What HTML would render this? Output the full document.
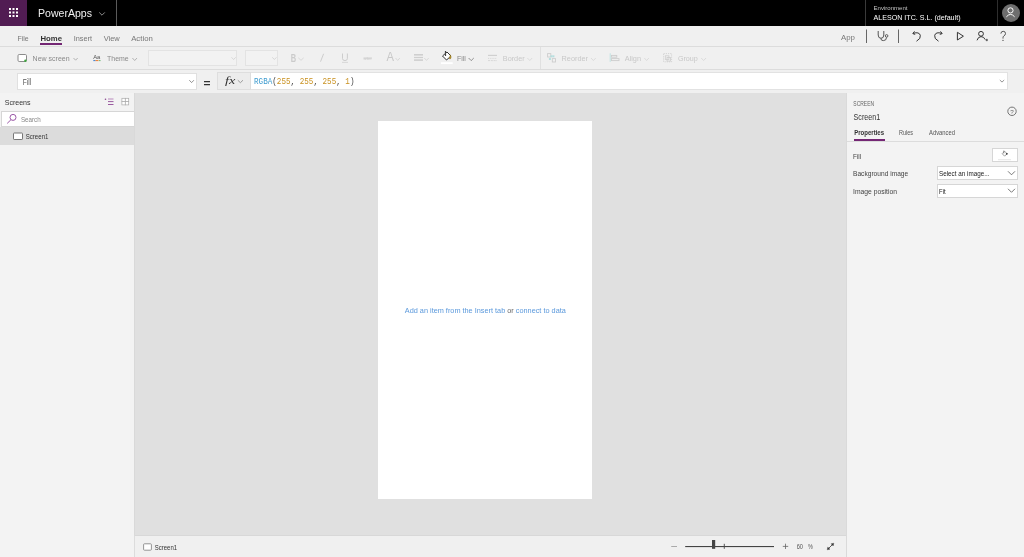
<!DOCTYPE html>
<html><head><meta charset="utf-8">
<style>
html,body{margin:0;padding:0;width:1024px;height:557px;overflow:hidden;background:#f0f0f0;font-family:"Liberation Sans",sans-serif;}
.a{position:absolute;box-sizing:border-box;}
svg{position:absolute;left:0;top:0;will-change:transform;}
text{font-family:"Liberation Sans",sans-serif;}
.m{font-family:"Liberation Mono",monospace;}
</style></head><body>
<!-- header -->
<div class="a" style="left:0;top:0;width:1024px;height:26px;background:#000"></div>
<div class="a" style="left:0;top:0;width:27px;height:26px;background:#511c53"></div>
<div class="a" style="left:116px;top:0;width:1px;height:26px;background:#5a5a5a"></div>
<div class="a" style="left:865px;top:0;width:1px;height:26px;background:#3a3a3a"></div>
<div class="a" style="left:997px;top:0;width:1px;height:26px;background:#2e2e2e"></div>
<div class="a" style="left:1002px;top:4px;width:18px;height:18px;border-radius:50%;background:#6e6e6e"></div>
<!-- ribbon -->
<div class="a" style="left:0;top:26px;width:1024px;height:21px;background:#f0f0f0;border-bottom:1px solid #dcdcdc"></div>
<div class="a" style="left:0;top:47px;width:1024px;height:23px;background:#f0f0f0;border-bottom:1px solid #dcdcdc"></div>
<div class="a" style="left:40px;top:43px;width:22px;height:2px;background:#742774"></div>
<!-- toolbar boxes -->
<div class="a" style="left:148px;top:50px;width:89px;height:16px;background:#f2f2f2;border:1px solid #e3e3e3"></div>
<div class="a" style="left:245px;top:50px;width:33px;height:16px;background:#f2f2f2;border:1px solid #e3e3e3"></div>
<div class="a" style="left:540px;top:47px;width:1px;height:22px;background:#e0e0e0"></div>
<!-- formula row -->
<div class="a" style="left:0;top:70px;width:1024px;height:23px;background:#f0f0f0"></div>
<div class="a" style="left:17px;top:73px;width:180px;height:17px;background:#fff;border:1px solid #e0e0e0"></div>
<div class="a" style="left:217px;top:72px;width:34px;height:18px;background:#ececec;border:1px solid #dedede"></div>
<div class="a" style="left:251px;top:72px;width:757px;height:18px;background:#fff;border:1px solid #e2e2e2;border-left:none"></div>

<!-- left panel -->
<div class="a" style="left:0;top:93px;width:134px;height:464px;background:#f3f3f3"></div>
<div class="a" style="left:1px;top:111px;width:134px;height:16px;background:#fff;border:1px solid #d6d6d6"></div>
<div class="a" style="left:0;top:127px;width:134px;height:18px;background:#dcdcdc"></div>
<!-- canvas -->
<div class="a" style="left:134px;top:93px;width:712px;height:443px;background:#e0e0e0;border-left:1px solid #d9d9d9"></div>
<div class="a" style="left:378px;top:121px;width:214px;height:378px;background:#fff"></div>
<div class="a" style="left:134px;top:535px;width:712px;height:22px;background:#f0f0f0;border-top:1px solid #d8d8d8;border-left:1px solid #dcdcdc"></div>
<!-- right panel -->
<div class="a" style="left:846px;top:93px;width:178px;height:464px;background:#f3f3f3;border-left:1px solid #dadada"></div>
<div class="a" style="left:847px;top:141px;width:177px;height:1px;background:#dcdcdc"></div>
<div class="a" style="left:854px;top:139px;width:31px;height:2px;background:#742774"></div>
<div class="a" style="left:992px;top:148px;width:26px;height:14px;background:#fff;border:1px solid #d6d6d6"></div>
<div class="a" style="left:937px;top:166px;width:81px;height:14px;background:#fff;border:1px solid #d6d6d6"></div>
<div class="a" style="left:937px;top:184px;width:81px;height:14px;background:#fff;border:1px solid #d6d6d6"></div>

<svg width="1024" height="557" viewBox="0 0 1024 557">
<!-- header texts -->
<text x="38" y="17" font-size="11" fill="#f0f0f0" textLength="54" lengthAdjust="spacingAndGlyphs">PowerApps</text>
<text x="873.5" y="9.6" font-size="5.5" fill="#c4c4c4" textLength="34" lengthAdjust="spacingAndGlyphs">Environment</text>
<text x="873.5" y="20" font-size="8" fill="#fff" textLength="87" lengthAdjust="spacingAndGlyphs">ALESON ITC. S.L. (default)</text>
<!-- tabs -->
<g font-size="8" fill="#777">
<text x="17.5" y="41.2" textLength="11.2" lengthAdjust="spacingAndGlyphs">File</text>
<text x="40.5" y="41.2" font-weight="bold" fill="#333" textLength="21.5" lengthAdjust="spacingAndGlyphs">Home</text>
<text x="73.7" y="41.2" textLength="18.3" lengthAdjust="spacingAndGlyphs">Insert</text>
<text x="103.7" y="41.2" textLength="16.1" lengthAdjust="spacingAndGlyphs">View</text>
<text x="131.2" y="41.2" textLength="21.6" lengthAdjust="spacingAndGlyphs">Action</text>
<text x="841" y="40" textLength="14" lengthAdjust="spacingAndGlyphs">App</text>
</g>
<!-- toolbar texts -->
<g font-size="8" fill="#8a8a8a">
<text x="32.6" y="61.1" textLength="37" lengthAdjust="spacingAndGlyphs">New screen</text>
<text x="107.1" y="61.1" textLength="21.6" lengthAdjust="spacingAndGlyphs">Theme</text>
<text x="457" y="61.1" fill="#888" textLength="8.8" lengthAdjust="spacingAndGlyphs">Fill</text>
<text x="502.8" y="61.1" fill="#c8c8c8" textLength="21.8" lengthAdjust="spacingAndGlyphs">Border</text>
<text x="561.6" y="61.1" fill="#c8c8c8" textLength="26.4" lengthAdjust="spacingAndGlyphs">Reorder</text>
<text x="624.7" y="61.1" fill="#c8c8c8" textLength="16.3" lengthAdjust="spacingAndGlyphs">Align</text>
<text x="677.9" y="61.1" fill="#c8c8c8" textLength="19.9" lengthAdjust="spacingAndGlyphs">Group</text>
</g>
<!-- formula -->
<text x="22.8" y="84.7" font-size="8.3" fill="#555" textLength="8.4" lengthAdjust="spacingAndGlyphs">Fill</text>
<text x="254" y="83.8" font-size="8.5" class="m" textLength="100.5" lengthAdjust="spacingAndGlyphs"><tspan fill="#3c9bcf">RGBA</tspan><tspan fill="#444">(</tspan><tspan fill="#c9901e">255</tspan><tspan fill="#444">, </tspan><tspan fill="#c9901e">255</tspan><tspan fill="#444">, </tspan><tspan fill="#c9901e">255</tspan><tspan fill="#444">, </tspan><tspan fill="#c9901e">1</tspan><tspan fill="#444">)</tspan></text>
<text x="203.6" y="86.8" font-size="11" fill="#333" font-weight="bold" textLength="7" lengthAdjust="spacingAndGlyphs">=</text>
<text x="225" y="84.3" font-size="10.5" fill="#333" style="font-family:'Liberation Serif',serif;font-style:italic" textLength="10.3" lengthAdjust="spacingAndGlyphs">fx</text>
<!-- left panel -->
<text x="4.7" y="105.1" font-size="8" fill="#333" textLength="25.8" lengthAdjust="spacingAndGlyphs">Screens</text>
<text x="20.9" y="122" font-size="7.5" fill="#888" textLength="19.8" lengthAdjust="spacingAndGlyphs">Search</text>
<text x="25.7" y="139" font-size="7" fill="#333" textLength="22.8" lengthAdjust="spacingAndGlyphs">Screen1</text>
<!-- right panel -->
<text x="853.3" y="106.3" font-size="6.3" fill="#666" textLength="20.8" lengthAdjust="spacingAndGlyphs">SCREEN</text>
<text x="853.6" y="120" font-size="9" fill="#333" textLength="26.6" lengthAdjust="spacingAndGlyphs">Screen1</text>
<text x="854.2" y="135" font-size="7" fill="#333" font-weight="bold" textLength="29.9" lengthAdjust="spacingAndGlyphs">Properties</text>
<text x="899" y="135" font-size="7" fill="#555" textLength="14" lengthAdjust="spacingAndGlyphs">Rules</text>
<text x="929" y="135" font-size="7" fill="#555" textLength="26" lengthAdjust="spacingAndGlyphs">Advanced</text>
<text x="853" y="158.5" font-size="7.3" fill="#444" textLength="8.1" lengthAdjust="spacingAndGlyphs">Fill</text>
<text x="853" y="176" font-size="7.3" fill="#444" textLength="55.2" lengthAdjust="spacingAndGlyphs">Background image</text>
<text x="853" y="194" font-size="7.3" fill="#444" textLength="44" lengthAdjust="spacingAndGlyphs">Image position</text>
<text x="939" y="176" font-size="7.3" fill="#222" textLength="50.5" lengthAdjust="spacingAndGlyphs">Select an image...</text>
<text x="939" y="194" font-size="7.3" fill="#222" textLength="6.6" lengthAdjust="spacingAndGlyphs">Fit</text>
<!-- canvas -->
<text x="404.8" y="312.7" font-size="7.5" fill="#5b99dc" textLength="161" lengthAdjust="spacingAndGlyphs">Add an item from the Insert tab <tspan fill="#666">or</tspan> connect to data</text>
<!-- status -->
<text x="154.8" y="549.8" font-size="7.3" fill="#333" textLength="22.3" lengthAdjust="spacingAndGlyphs">Screen1</text>
<text x="796.7" y="549.4" font-size="7" fill="#555" textLength="6.3" lengthAdjust="spacingAndGlyphs">60</text>
<text x="807.9" y="549.4" font-size="7" fill="#555" textLength="4.8" lengthAdjust="spacingAndGlyphs">%</text>

<!-- ICONS -->
<g fill="#fff">
<rect x="9" y="8" width="2" height="2"/><rect x="12.5" y="8" width="2" height="2"/><rect x="16" y="8" width="2" height="2"/>
<rect x="9" y="11.5" width="2" height="2"/><rect x="12.5" y="11.5" width="2" height="2"/><rect x="16" y="11.5" width="2" height="2"/>
<rect x="9" y="15" width="2" height="2"/><rect x="12.5" y="15" width="2" height="2"/><rect x="16" y="15" width="2" height="2"/>
</g>
<path d="M99.2 12.4 L102 15.2 L104.8 12.4" fill="none" stroke="#9a9a9a" stroke-width="0.9"/>
<g fill="none" stroke="#fff" stroke-width="1">
<circle cx="1010.5" cy="10.4" r="2.6"/>
<path d="M1006.4 16.8 Q1010.5 12 1014.6 16.8"/>
</g>
<!-- toolbar icons -->
<rect x="18" y="54.5" width="8.5" height="7" rx="1.2" fill="#fff" stroke="#8a8a8a" stroke-width="1"/>
<circle cx="25.4" cy="60.8" r="1.2" fill="#3ea53e"/>
<path d="M73.5 58 L75.6 60.2 L77.7 58" fill="none" stroke="#999" stroke-width="0.7"/>
<text x="93.2" y="58.6" font-size="6" fill="#555" textLength="7.2" lengthAdjust="spacingAndGlyphs">Aa</text>
<rect x="93.3" y="60.1" width="2.2" height="1" fill="#3b7fd0"/><rect x="95.5" y="60.1" width="3" height="1" fill="#e8792c"/><rect x="99.3" y="60.1" width="1.1" height="1" fill="#36a040"/>
<path d="M132.4 58 L134.7 60.5 L137 58" fill="none" stroke="#999" stroke-width="0.7"/>
<path d="M231.5 57.3 L233.6 59.5 L235.7 57.3" fill="none" stroke="#ccc" stroke-width="0.7"/>
<path d="M272.3 57.3 L274.4 59.5 L276.5 57.3" fill="none" stroke="#ccc" stroke-width="0.7"/>
<text x="290.8" y="61.7" font-size="10.5" font-weight="bold" fill="#cbcbcb" textLength="5.4" lengthAdjust="spacingAndGlyphs">B</text>
<path d="M298.3 57.8 L301 60.3 L303.7 57.8" fill="none" stroke="#cfcfcf" stroke-width="0.7"/>
<path d="M323.6 53.8 L320.5 61.7" fill="none" stroke="#c8c8c8" stroke-width="0.9"/>
<path d="M342.5 53.5 V58.5 Q342.5 60.6 345 60.6 Q347.4 60.6 347.4 58.5 V53.5" fill="none" stroke="#c8c8c8" stroke-width="0.9"/>
<rect x="342" y="61.9" width="6" height="0.8" fill="#d0d0d0"/>
<rect x="363.5" y="57.6" width="8.4" height="1" fill="#c8c8c8"/>
<text x="363.5" y="59.6" font-size="4.2" fill="#cfcfcf" textLength="8.4" lengthAdjust="spacingAndGlyphs">abc</text>
<text x="386.5" y="60.8" font-size="12" fill="#c8c8c8" textLength="7.5" lengthAdjust="spacingAndGlyphs">A</text>
<path d="M395.5 58 L397.7 60.4 L399.9 58" fill="none" stroke="#cfcfcf" stroke-width="0.7"/>
<g fill="#cfcfcf"><rect x="414" y="54" width="9" height="1.6"/><rect x="414" y="56.9" width="9" height="1.2"/><rect x="414" y="59.3" width="9" height="1.6"/></g>
<path d="M424.3 58 L426.5 60.4 L428.7 58" fill="none" stroke="#cfcfcf" stroke-width="0.7"/>
<!-- fill bucket -->
<rect x="440.9" y="62.2" width="11.8" height="1.9" fill="#fff"/>
<path d="M447 52 L451 56 L446.5 60 L442.5 56 Z" fill="#fff" stroke="#333" stroke-width="1"/>
<path d="M445.5 51 V56" stroke="#444" stroke-width="1.2"/>
<path d="M450 54.5 Q451.5 56.5 451 58 Q450.2 59.8 449.2 58.5" fill="#b8962e" stroke="#8a6d1e" stroke-width="0.5"/>
<path d="M468.6 58 L471.2 60.6 L473.8 58" fill="none" stroke="#777" stroke-width="0.8"/>
<rect x="488" y="54.8" width="9" height="1.2" fill="#d0d0d0"/><path d="M488 58.4 H497" stroke="#d0d0d0" stroke-width="0.8" stroke-dasharray="1 0.8"/><path d="M488 60.6 H497" stroke="#d0d0d0" stroke-width="0.8" stroke-dasharray="2 0.8"/>
<path d="M527.4 58 L529.8 60.5 L532.2 58" fill="none" stroke="#d2d2d2" stroke-width="0.7"/>
<g fill="none" stroke="#cdcdcd" stroke-width="0.9"><rect x="547.6" y="53.6" width="3.2" height="3.4"/><rect x="552.3" y="58.6" width="3.2" height="3.4"/></g>
<g fill="#b5dede"><rect x="550.5" y="55.3" width="2" height="2"/><rect x="548.9" y="58" width="2" height="2"/><rect x="552.4" y="55.3" width="2" height="2"/></g>
<path d="M591 58 L593.4 60.5 L595.8 58" fill="none" stroke="#d2d2d2" stroke-width="0.7"/>
<rect x="609.7" y="53.3" width="1" height="8.5" fill="#bfe3e3"/>
<g fill="none" stroke="#cdcdcd" stroke-width="0.9"><rect x="611.4" y="55.4" width="5.4" height="1.8"/><rect x="611.4" y="58.6" width="7.6" height="2"/></g>
<path d="M644.3 58 L646.6 60.5 L648.9 58" fill="none" stroke="#d2d2d2" stroke-width="0.7"/>
<g fill="none" stroke="#cdcdcd" stroke-width="0.8"><rect x="663.6" y="53.6" width="8" height="8.2" stroke-dasharray="1.2 1"/><rect x="665.3" y="55.8" width="3.6" height="3.6"/><rect x="667" y="57.5" width="3.6" height="3.6"/></g>
<path d="M701.2 58 L703.6 60.5 L706 58" fill="none" stroke="#d2d2d2" stroke-width="0.7"/>
<!-- tab row right icons -->
<g fill="none" stroke-width="1">
<path d="M866.5 29.5 V43" stroke="#666"/>
<path d="M898.5 29.5 V43" stroke="#666"/>
<path d="M878.2 31 V35 Q878.2 38.3 881 38.3 Q883.8 38.3 883.8 35 V31 M881 38.3 V39 Q881 40.6 883.4 40.6 Q886.5 40.6 886.5 37.5" stroke="#555"/>
<circle cx="886.6" cy="35.9" r="1.3" stroke="#555"/>
<path d="M912.8 33.6 L914.5 31.4 M912.8 33.6 L915.2 34.4 M913.2 33.3 Q919.2 31.6 920.3 35.3 Q921.2 38.5 916.5 41.2" stroke="#333"/>
<path d="M942.2 33.6 L940.5 31.4 M942.2 33.6 L939.8 34.4 M941.8 33.3 Q935.8 31.6 934.7 35.3 Q933.8 38.5 938.5 41.2" stroke="#333"/>
<path d="M957.4 32.3 L963.4 36.2 L957.4 40 Z" stroke="#333"/>
<circle cx="981" cy="33.8" r="2.4" stroke="#333"/>
<path d="M977 40.3 Q978 36.8 981 36.6 Q984 36.6 985.2 39.6" stroke="#333"/>
<path d="M986.8 38.8 V41.2 M985.6 40 H988" stroke="#333" stroke-width="0.8"/>
</g>
<path d="M1000.9 33.6 Q1001 31.3 1003.2 31.3 Q1005.5 31.3 1005.5 33.5 Q1005.5 35.1 1003.7 36.1 Q1003 36.6 1003 37.8 V38.6" fill="none" stroke="#444" stroke-width="0.9"/><circle cx="1003" cy="40.4" r="0.6" fill="#444"/>
<!-- formula icons -->
<path d="M189.3 80.2 L191.6 82.6 L193.9 80.2" fill="none" stroke="#777" stroke-width="0.8"/>
<path d="M237.8 80.2 L240.4 82.7 L243 80.2" fill="none" stroke="#888" stroke-width="0.8"/>
<path d="M999.8 80 L1002 82.1 L1004.2 80" fill="none" stroke="#777" stroke-width="0.8"/>
<!-- left panel icons -->
<circle cx="105.5" cy="99.3" r="0.8" fill="#8b4a90"/>
<g fill="#9b5ba0"><rect x="108" y="98.5" width="5.5" height="1" fill="#b98abd"/><rect x="108" y="101.1" width="5.5" height="1"/><rect x="108" y="104" width="5.5" height="1"/></g>
<g fill="#fff" stroke="#aaaaaa" stroke-width="0.7"><rect x="121.9" y="98.3" width="3.4" height="3.3"/><rect x="125.3" y="98.3" width="3.4" height="3.3"/><rect x="121.9" y="101.6" width="3.4" height="3.3"/><rect x="125.3" y="101.6" width="3.4" height="3.3"/></g>
<g fill="none" stroke="#9a57a6" stroke-width="1"><circle cx="13" cy="117.4" r="3"/><path d="M10.9 119.8 L7.2 123.4"/></g>
<rect x="13.5" y="133" width="9" height="6.5" rx="0.6" fill="#fff" stroke="#777" stroke-width="1"/>
<!-- right panel icons -->
<g fill="none" stroke="#666" stroke-width="0.9"><circle cx="1012" cy="111.3" r="4.2"/></g>
<text x="1010.2" y="113.8" font-size="6" fill="#666" textLength="3.5" lengthAdjust="spacingAndGlyphs">?</text>
<path d="M1004.6 151.2 L1007 153.7 L1004.6 156.2 L1002.2 153.7 Z" fill="#fff" stroke="#888" stroke-width="0.8"/>
<circle cx="1006.8" cy="153.8" r="0.9" fill="#333"/>
<path d="M1003.8 150.6 V153.4" stroke="#777" stroke-width="0.9"/>
<rect x="998" y="159.3" width="13" height="0.9" fill="#e2e2e2"/>
<path d="M1008 171.3 L1011.5 174.8 L1015 171.3" fill="none" stroke="#555" stroke-width="0.8"/>
<path d="M1008 188.8 L1011.5 192.3 L1015 188.8" fill="none" stroke="#555" stroke-width="0.8"/>
<!-- status bar -->
<rect x="143.6" y="543.8" width="7.8" height="6.4" rx="0.8" fill="#fff" stroke="#888" stroke-width="0.9"/>
<rect x="671.2" y="546.2" width="5.8" height="0.8" fill="#999"/>
<rect x="685.2" y="546" width="88.8" height="1.1" fill="#444"/>
<rect x="712" y="540" width="3.2" height="8.8" fill="#444"/>
<rect x="723.8" y="543.8" width="0.9" height="5" fill="#444"/>
<path d="M785.5 543.7 V549 M782.8 546.4 H788.2" stroke="#666" stroke-width="0.8"/>
<g stroke="#333" fill="#333"><path d="M828 549 L833 544" stroke-width="0.8"/><path d="M833.8 543.2 L831 543.8 L833.2 546 Z" stroke-width="0.3"/><path d="M827.2 549.8 L827.8 547 L830 549.2 Z" stroke-width="0.3"/></g>
</svg>
</body></html>
